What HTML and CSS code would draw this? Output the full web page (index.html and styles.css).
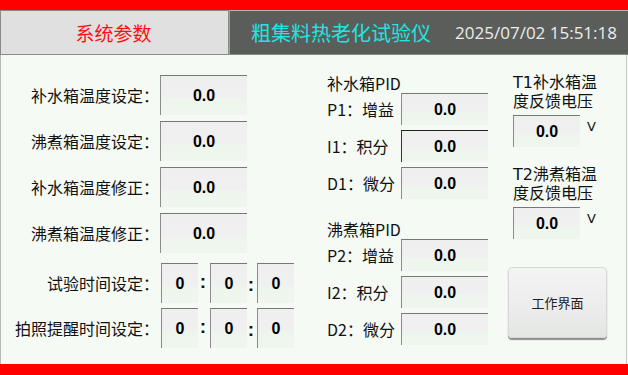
FILE: index.html
```html
<!DOCTYPE html>
<html>
<head>
	<title>系统参数</title>
	<meta charset="utf-8">
	<link rel="stylesheet" href="styles.css">
</head>
<body>
	<div class="bar"></div>
	<header class="tabs">
		<div class="tab-params">系统参数</div>
		<div class="tab-title">
			<span class="title">粗集料热老化试验仪</span>
			<span class="clock">2025/07/02 15:51:18</span>
		</div>
	</header>

	<main class="panel">
		<section class="col-set">
			<div class="row"><label>补水箱温度设定：</label><div class="field wide">0.0</div></div>
			<div class="row"><label>沸煮箱温度设定：</label><div class="field wide">0.0</div></div>
			<div class="row"><label>补水箱温度修正：</label><div class="field wide">0.0</div></div>
			<div class="row"><label>沸煮箱温度修正：</label><div class="field wide">0.0</div></div>
			<div class="row time first">
				<label>试验时间设定：</label>
				<div class="field short">0</div><span class="sep">:</span>
				<div class="field short">0</div><span class="sep sep2">:</span>
				<div class="field short">0</div>
			</div>
			<div class="row time">
				<label>拍照提醒时间设定：</label>
				<div class="field short">0</div><span class="sep">:</span>
				<div class="field short">0</div><span class="sep sep2">:</span>
				<div class="field short">0</div>
			</div>
		</section>

		<section class="col-pid">
			<h3>补水箱PID</h3>
			<div class="pid"><label>P1：增益</label><div class="field">0.0</div></div>
			<div class="pid"><label>I1：积分</label><div class="field focus">0.0</div></div>
			<div class="pid"><label>D1：微分</label><div class="field">0.0</div></div>

			<h3 class="second">沸煮箱PID</h3>
			<div class="pid"><label>P2：增益</label><div class="field">0.0</div></div>
			<div class="pid"><label>I2：积分</label><div class="field">0.0</div></div>
			<div class="pid"><label>D2：微分</label><div class="field">0.0</div></div>
		</section>

		<section class="col-volt">
			<p class="vlabel">T1补水箱温<br>度反馈电压</p>
			<div class="volt"><div class="field small">0.0</div><span class="unit">V</span></div>
			<p class="vlabel second">T2沸煮箱温<br>度反馈电压</p>
			<div class="volt"><div class="field small">0.0</div><span class="unit">V</span></div>
			<button class="work">工作界面</button>
		</section>
	</main>
	<div class="bar bottom"></div>
</body>
</html>
```
FILE: styles.css
```css
* {
	margin: 0;
	padding: 0;
	box-sizing: border-box;
}

body {
	width: 628px;
	height: 375px;
	overflow: hidden;
	background: #f5faf5;
	font-family: "DejaVu Sans", "Noto Sans CJK SC", sans-serif;
	font-size: 16px;
	color: #111;
}

.bar {
	height: 10px;
	background: #ff0000;
}
.bar.bottom {
	height: 11px;
}

/* header tabs */
.tabs {
	display: flex;
	height: 45px;
}

.tab-params {
	width: 229px;
	background: #e0e0e0;
	border: 1px solid #8a8a8a;
	color: #ff1010;
	font-family: "Noto Sans CJK SC", sans-serif;
	font-size: 19px;
	display: flex;
	align-items: center;
	justify-content: center;
	padding-right: 2px;
}

.tab-title {
	flex: 1;
	background: #5a5d59;
	border-top: 1px solid #b4b4b4;
	border-left: 1px solid #a0a0a0;
	border-bottom: 1px solid #8a8a8a;
	display: flex;
	align-items: center;
	justify-content: space-between;
	padding: 0 11px 0 21px;
}

.title {
	color: #22e4e4;
	font-family: "Noto Sans CJK SC", sans-serif;
	font-size: 20px;
}

.clock {
	color: #ececec;
	font-family: "Open Sans", sans-serif;
	font-size: 17px;
}

/* main panel */
.panel {
	height: 309px;
	display: flex;
	border-left: 1px solid #b8b8b8;
	border-right: 1px solid #c8c8c8;
	margin-right: 1px;
	font-family: "Noto Sans CJK SC", sans-serif;
}

.field {
	height: 40px;
	width: 87px;
	border-top: 1px solid #777;
	border-left: 1px solid #8c8c8c;
	background: linear-gradient(#efefef 0%, #f0f0f0 55%, #edf5ed 58%, #eef6ee 100%);
	font-family: "Liberation Sans", sans-serif;
	font-weight: bold;
	font-size: 16px;
	color: #000;
	display: flex;
	align-items: center;
	justify-content: center;
}
.field.focus {
	border-top-color: #222;
	border-left-color: #333;
}

.col-set {
	width: 309px;
	padding-top: 20px;
}

.row {
	display: flex;
	align-items: center;
	height: 40px;
	margin-bottom: 6px;
}
.row label {
	width: 159px;
	text-align: right;
	padding-right: 1px;
}
.row.first {
	margin-top: 10px;
	margin-bottom: 5px;
}
.row.time .field {
	width: 37px;
	margin-left: 1px;
}
.sep {
	width: 12px;
	text-align: center;
	font-family: "Liberation Sans", sans-serif;
	font-weight: bold;
	font-size: 19px;
	margin-left: -1px;
	padding-bottom: 3px;
}
.sep2 {
	width: 10px;
	padding: 3px 0 0;
}

.col-pid {
	width: 203px;
	padding: 18px 0 0 17px;
}

.col-pid h3 {
	font-weight: normal;
	font-size: 16px;
	line-height: 20px;
}
.col-pid h3.second {
	margin-top: 20px;
}

.pid {
	display: flex;
	align-items: center;
	margin-bottom: 5px;
}
.pid label {
	width: 74px;
}
.pid .field {
	height: 32px;
}

.col-volt {
	flex: 1;
	padding-top: 18px;
}

.vlabel {
	font-family: "DejaVu Sans", "Noto Sans CJK SC", sans-serif;
	line-height: 19px;
}
.vlabel.second {
	margin-top: 18px;
}

.volt {
	display: flex;
	align-items: flex-start;
	margin-top: 4px;
}
.volt .field.small {
	width: 67px;
	height: 32px;
}
.unit {
	font-family: "DejaVu Sans", sans-serif;
	font-size: 13px;
	margin: 4px 0 0 7px;
}

.work {
	display: block;
	width: 99px;
	height: 71px;
	margin: 28px 0 0 -5px;
	border: 1px solid #d8d8d8;
	border-radius: 4px;
	background: linear-gradient(#f4f4f4, #e4e6e4);
	box-shadow: 0 2px 1px #8e8e8e;
	font-family: "Noto Sans CJK SC", sans-serif;
	font-size: 13px;
	color: #222;
}
```
